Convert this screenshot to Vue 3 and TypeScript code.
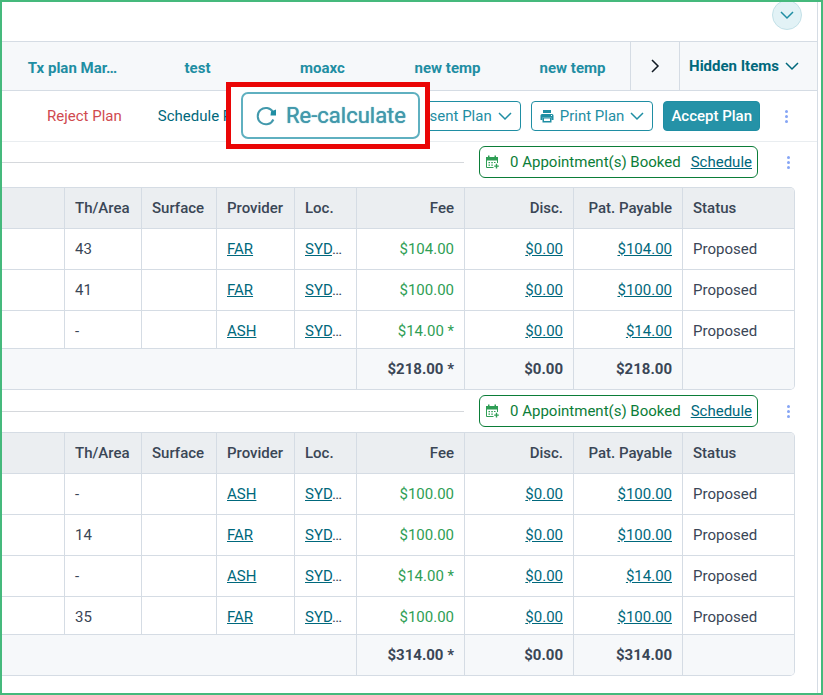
<script setup lang="ts">
interface Item {
  area: string
  provider: string
  fee: string
  payable: string
}

interface Visit {
  id: number
  items: Item[]
  totalFee: string
  totalPayable: string
}

const tabs: string[] = ['Tx plan Mar…', 'test', 'moaxc', 'new temp', 'new temp']

const visits: Visit[] = [
  {
    id: 1,
    items: [
      { area: '43', provider: 'FAR', fee: '$104.00', payable: '$104.00' },
      { area: '41', provider: 'FAR', fee: '$100.00', payable: '$100.00' },
      { area: '-', provider: 'ASH', fee: '$14.00 *', payable: '$14.00' },
    ],
    totalFee: '$218.00 *',
    totalPayable: '$218.00',
  },
  {
    id: 2,
    items: [
      { area: '-', provider: 'ASH', fee: '$100.00', payable: '$100.00' },
      { area: '14', provider: 'FAR', fee: '$100.00', payable: '$100.00' },
      { area: '-', provider: 'ASH', fee: '$14.00 *', payable: '$14.00' },
      { area: '35', provider: 'FAR', fee: '$100.00', payable: '$100.00' },
    ],
    totalFee: '$314.00 *',
    totalPayable: '$314.00',
  },
]
</script>

<template>
  <div class="frame">
    <main class="panel">
      <header class="top">
        <button class="collapse" type="button" aria-label="Collapse">
          <svg class="chevron" viewBox="0 0 14 14"><path d="M1 4l6 6 6-6" /></svg>
        </button>
      </header>

      <div class="tabbar">
        <nav class="tabs">
          <a v-for="(tab, i) in tabs" :key="i" class="tab" href="#">{{ tab }}</a>
        </nav>
        <button class="next" type="button" aria-label="Next">
          <svg class="arrow" viewBox="0 0 14 14"><path d="M4 1l6 6-6 6" /></svg>
        </button>
        <button class="hidden-items" type="button">
          Hidden Items
          <svg class="chevron" viewBox="0 0 14 14"><path d="M1 4l6 6 6-6" /></svg>
        </button>
      </div>

      <div class="actions">
        <button class="text-btn reject" type="button">Reject Plan</button>
        <button class="text-btn" type="button">Schedule Plan</button>
        <div class="action-group">
          <button class="btn" type="button">
            Present Plan
            <svg class="chevron" viewBox="0 0 14 14"><path d="M1 4l6 6 6-6" /></svg>
          </button>
          <button class="btn" type="button">
            <svg class="printer" viewBox="0 0 14 14">
              <path d="M3 1h8v3H3z" />
              <path fill-rule="evenodd" d="M2 5h10a1.5 1.5 0 0 1 1.500 1.500V11H11.500V8.500h-9V11H.5V6.500A1.500 1.500 0 0 1 2 5zM11 6v1h1V6z" />
              <path fill-rule="evenodd" d="M2.500 8.500h9V13.500h-9zM4 9.500v2.500h6V9.500z" />
            </svg>
            Print Plan
            <svg class="chevron" viewBox="0 0 14 14"><path d="M1 4l6 6 6-6" /></svg>
          </button>
          <button class="btn primary" type="button">Accept Plan</button>
        </div>
        <button class="kebab" type="button" aria-label="More"><i></i><i></i><i></i></button>

        <div class="callout">
          <button class="recalc" type="button">
            <svg class="refresh" viewBox="0 0 22 22">
              <path class="arc" d="M18 7A8.200 8.200 0 1 0 18.400 14.500" />
              <path class="tip" d="M21 4.500v6h-5.500l.5-4z" />
            </svg>
            Re-calculate
          </button>
        </div>
      </div>

      <section v-for="visit in visits" :key="visit.id" class="visit">
        <div class="visit-head">
          <span class="rule"></span>
          <div class="booked">
            <svg class="calendar" viewBox="0 0 14 14">
              <path d="M1 2h2V.5h1.500V2h5V.5H11V2h2v3.500H1z" />
              <path class="line" d="M1.500 5v7.500h7M12.500 5v3" />
              <path d="M3.500 7H5v1.200H3.500zM6.300 7h1.500v1.200H6.300zM9 7h1.500v1H9zM3.500 9.500H5v1.200H3.500zM6.300 9.500h1.500v1.200H6.300z" />
              <path d="M10.800 8.800h1.400v1.700h1.600v1.300h-1.600v1.700h-1.400v-1.700H9.200v-1.300h1.600z" />
            </svg>
            <span class="booked-text">0 Appointment(s) Booked</span>
            <a class="link" href="#">Schedule</a>
          </div>
          <button class="kebab" type="button" aria-label="More"><i></i><i></i><i></i></button>
        </div>

        <div class="table-wrap">
          <table>
            <colgroup>
              <col class="c-item" /><col class="c-area" /><col class="c-surface" />
              <col class="c-provider" /><col class="c-loc" /><col class="c-fee" />
              <col class="c-money" /><col class="c-money" /><col />
            </colgroup>
            <thead>
              <tr>
                <th></th>
                <th>Th/Area</th>
                <th>Surface</th>
                <th>Provider</th>
                <th>Loc.</th>
                <th class="num">Fee</th>
                <th class="num">Disc.</th>
                <th class="num">Pat. Payable</th>
                <th>Status</th>
              </tr>
            </thead>
            <tbody>
              <tr v-for="(item, i) in visit.items" :key="i">
                <td></td>
                <td>{{ item.area }}</td>
                <td></td>
                <td><a class="link" href="#">{{ item.provider }}</a></td>
                <td><a class="link" href="#">SYD</a>…</td>
                <td class="num fee">{{ item.fee }}</td>
                <td class="num"><a class="link" href="#">$0.00</a></td>
                <td class="num"><a class="link" href="#">{{ item.payable }}</a></td>
                <td>Proposed</td>
              </tr>
            </tbody>
            <tfoot>
              <tr>
                <td colspan="5"></td>
                <td class="num">{{ visit.totalFee }}</td>
                <td class="num">$0.00</td>
                <td class="num">{{ visit.totalPayable }}</td>
                <td></td>
              </tr>
            </tfoot>
          </table>
        </div>
      </section>
    </main>
  </div>
</template>

<style>
body {
  background: #fff;
}
</style>

<style scoped>
* {
  box-sizing: border-box;
}
.frame {
  display: flex;
  min-height: 100vh;
  padding-right: 3px;
  overflow: hidden;
  border: 2px solid #45b97c;
  background: #fff;
  color: #3a4656;
  font: 15px/20px Roboto, "Liberation Sans", sans-serif;
}
.panel {
  flex: 1;
  min-width: 0;
  border-right: 1px solid #d5dce4;
}
button {
  margin: 0;
  padding: 0;
  border: 0;
  background: none;
  color: inherit;
  font: inherit;
  white-space: nowrap;
  cursor: pointer;
}
svg {
  display: block;
  flex: none;
  width: 14px;
  height: 14px;
  fill: currentColor;
}
.chevron,
.arrow {
  fill: none;
  stroke: currentColor;
  stroke-width: 1.5;
}
.top {
  display: flex;
  justify-content: flex-end;
  height: 40px;
  padding-right: 15px;
  border-bottom: 1px solid #d5dce4;
}
.collapse {
  display: grid;
  place-items: center;
  width: 30px;
  height: 30px;
  margin-top: -2px;
  border: 1px solid #c3e1e8;
  border-radius: 50%;
  background: #e2f2f6;
  color: #1f8ea3;
}
.tabbar {
  display: flex;
  height: 49px;
  border-bottom: 1px solid #d5dce4;
  background: #f6f8fa;
  font-weight: 700;
}
.tabs {
  display: flex;
  flex: 1;
  min-width: 0;
  padding-left: 8px;
  overflow: hidden;
}
.tab {
  flex: none;
  width: 125px;
  padding-top: 16px;
  color: #1f8ea3;
  text-align: center;
  text-decoration: none;
}
.next {
  display: grid;
  place-items: center;
  width: 49px;
  border-left: 1px solid #d5dce4;
  color: #111a24;
}
.hidden-items {
  display: flex;
  align-items: center;
  gap: 6px;
  padding: 0 18px 0 9px;
  border-left: 1px solid #d5dce4;
  color: #00687c;
  font-weight: 700;
}
.actions {
  position: relative;
  display: flex;
  align-items: center;
  gap: 36px;
  height: 51px;
  padding: 0 24px 0 45px;
  border-bottom: 1px solid #e9edf0;
}
.text-btn {
  color: #00687c;
}
.reject {
  color: #d04a4f;
}
.action-group {
  display: flex;
  gap: 10px;
  margin-left: auto;
}
.actions > .kebab {
  margin-left: -17px;
}
.btn {
  display: flex;
  align-items: center;
  gap: 6px;
  height: 30px;
  padding: 0 8px;
  border: 1px solid #1f8ea3;
  border-radius: 4px;
  color: #1f8ea3;
}
.primary {
  padding: 0 7px;
  background: #2592a7;
  color: #fff;
  font-weight: 500;
}
.kebab {
  display: flex;
  flex: none;
  flex-direction: column;
  align-items: center;
  justify-content: center;
  gap: 2px;
  width: 14px;
  height: 20px;
}
.kebab i {
  width: 3px;
  height: 3px;
  border-radius: 50%;
  background: #86a5f5;
}
.callout {
  position: absolute;
  top: -9px;
  left: 224px;
  padding: 5px 5px 5px 10px;
  border: 5px solid #ea0606;
  background: #fff;
}
.recalc {
  display: flex;
  align-items: center;
  gap: 9px;
  height: 47px;
  padding: 0 12px;
  border: 2px solid #5fb0c0;
  border-radius: 7px;
  color: #4299ac;
  font-size: 22px;
  text-shadow: 0 0 1px #4299ac;
}
.refresh {
  width: 22px;
  height: 22px;
}
.arc {
  fill: none;
  stroke: currentColor;
  stroke-width: 2;
}
.tip {
  fill: #1f8ea3;
}
.visit-head {
  display: flex;
  align-items: center;
  padding: 5px 22px 5px 0;
}
.visit:first-of-type .visit-head {
  padding: 4px 22px 9px 0;
}
.rule {
  flex: 1;
  height: 1px;
  background: #d5d8dc;
}
.booked {
  display: flex;
  align-items: center;
  height: 32px;
  margin: 0 23px 0 15px;
  padding: 0 5px;
  border: 1px solid #0b7d38;
  border-radius: 6px;
}
.booked-text {
  margin: 0 10px 0 11px;
  color: #0b7d38;
}
.calendar {
  color: #2f9e55;
}
.line {
  fill: none;
  stroke: currentColor;
}
.link {
  color: #00687c;
  text-decoration: underline;
  text-underline-offset: 1px;
}
.table-wrap {
  margin-right: 22px;
  overflow: hidden;
  border: 1px solid #d5dce4;
  border-left: 0;
  border-radius: 0 5px 5px 0;
}
table {
  width: 100%;
  border-spacing: 0;
  table-layout: fixed;
}
.c-item { width: 63px; }
.c-area { width: 77px; }
.c-surface { width: 75px; }
.c-provider { width: 78px; }
.c-loc { width: 62px; }
.c-fee { width: 108px; }
.c-money { width: 109px; }
th,
td {
  height: 41px;
  padding: 10px;
  border-right: 1px solid #d5dce4;
  border-bottom: 1px solid #d5dce4;
  text-align: left;
  vertical-align: top;
  white-space: nowrap;
}
th {
  background: #ebeef1;
  font-weight: 500;
}
th:last-child,
td:last-child {
  border-right: 0;
}
tbody tr:last-child td {
  height: 38px;
  padding-bottom: 7px;
}
tfoot td {
  height: 40px;
  border-bottom: 0;
  background: #f6f8fa;
  font-weight: 700;
}
.num {
  text-align: right;
}
.fee {
  color: #2f9e55;
}
</style>
